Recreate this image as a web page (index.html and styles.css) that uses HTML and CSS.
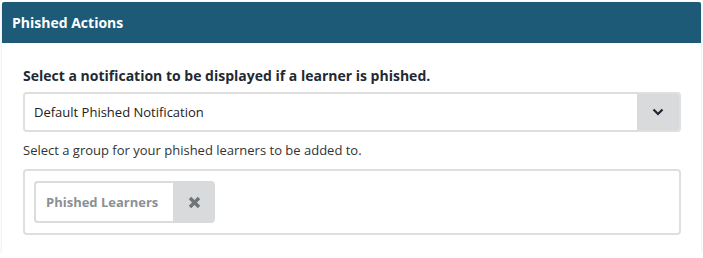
FILE: index.html
```html
<!DOCTYPE html>
<html>
<head>
<meta charset="utf-8">
<link rel="stylesheet" href="styles.css">
</head>
<body>
<div class="panel">
  <div class="panel-head">Phished Actions</div>
  <div class="panel-body">
    <div class="label">Select a notification to be displayed if a learner is phished.</div>
    <div class="select">
      <div class="select-value">Default Phished Notification</div>
      <div class="select-btn">
        <svg width="12" height="8" viewBox="0 0 12 8"><path d="M1.5 1.5 L6 6 L10.5 1.5" fill="none" stroke="#1d2733" stroke-width="2.2"/></svg>
      </div>
    </div>
    <div class="help">Select a group for your phished learners to be added to.</div>
    <div class="group-box">
      <div class="tag">
        <div class="tag-text">Phished Learners</div>
        <div class="tag-x">
          <svg width="13" height="13" viewBox="0 0 13 13"><path d="M2 2 L11 11 M11 2 L2 11" stroke="#6f7479" stroke-width="3.4" stroke-linecap="butt"/></svg>
        </div>
      </div>
    </div>
  </div>
</div>
</body>
</html>
```
FILE: styles.css
```css
html, body {
  margin: 0;
  padding: 0;
  background: #ffffff;
}
body {
  padding: 2px 2px 0 2px;
  font-family: "Open Sans", "Liberation Sans", sans-serif;
  color: #222;
}
.panel {
  width: 699px;
  background: #fff;
  box-shadow: 0 1px 3px rgba(0,0,0,0.14);
  border-radius: 2px 2px 0 0;
}
.panel-head {
  background: #1c5a78;
  color: #fff;
  font-weight: 700;
  font-size: 14px;
  height: 41px;
  line-height: 41px;
  padding-left: 10px;
  border-radius: 2px 2px 0 0;
}
.panel-body {
  padding: 23px 20px 18px 21px;
}
.label {
  font-weight: 700;
  font-size: 14px;
  line-height: 20px;
  color: #1f2a33;
  margin-bottom: 6px;
}
.select {
  display: flex;
  height: 40px;
  box-sizing: border-box;
  border: 2px solid #dfdfdf;
  border-radius: 4px;
  overflow: hidden;
}
.select-value {
  flex: 1;
  display: flex;
  align-items: center;
  padding-left: 9px;
  font-size: 13px;
  color: #222;
  background: #fff;
}
.select-btn {
  width: 42px;
  background: #d9dadb;
  display: flex;
  align-items: center;
  justify-content: center;
}
.help {
  font-size: 13px;
  line-height: 18px;
  color: #333;
  margin-top: 9px;
  margin-bottom: 10px;
}
.group-box {
  height: 66px;
  box-sizing: border-box;
  border: 2px solid #dfdfdf;
  border-radius: 4px;
  padding: 10px 9px;
}
.tag {
  display: inline-flex;
  vertical-align: top;
  height: 42px;
  border-radius: 4px;
  overflow: hidden;
  background: #d9dadb;
}
.tag-text {
  width: 139px;
  box-sizing: border-box;
  border: 2px solid #dcdcdc;
  border-right: none;
  border-radius: 4px 0 0 4px;
  background: #fff;
  display: flex;
  align-items: center;
  padding-left: 10px;
  font-weight: 700;
  font-size: 13px;
  color: #8b9095;
}
.tag-x {
  width: 42px;
  display: flex;
  align-items: center;
  justify-content: center;
}
```
